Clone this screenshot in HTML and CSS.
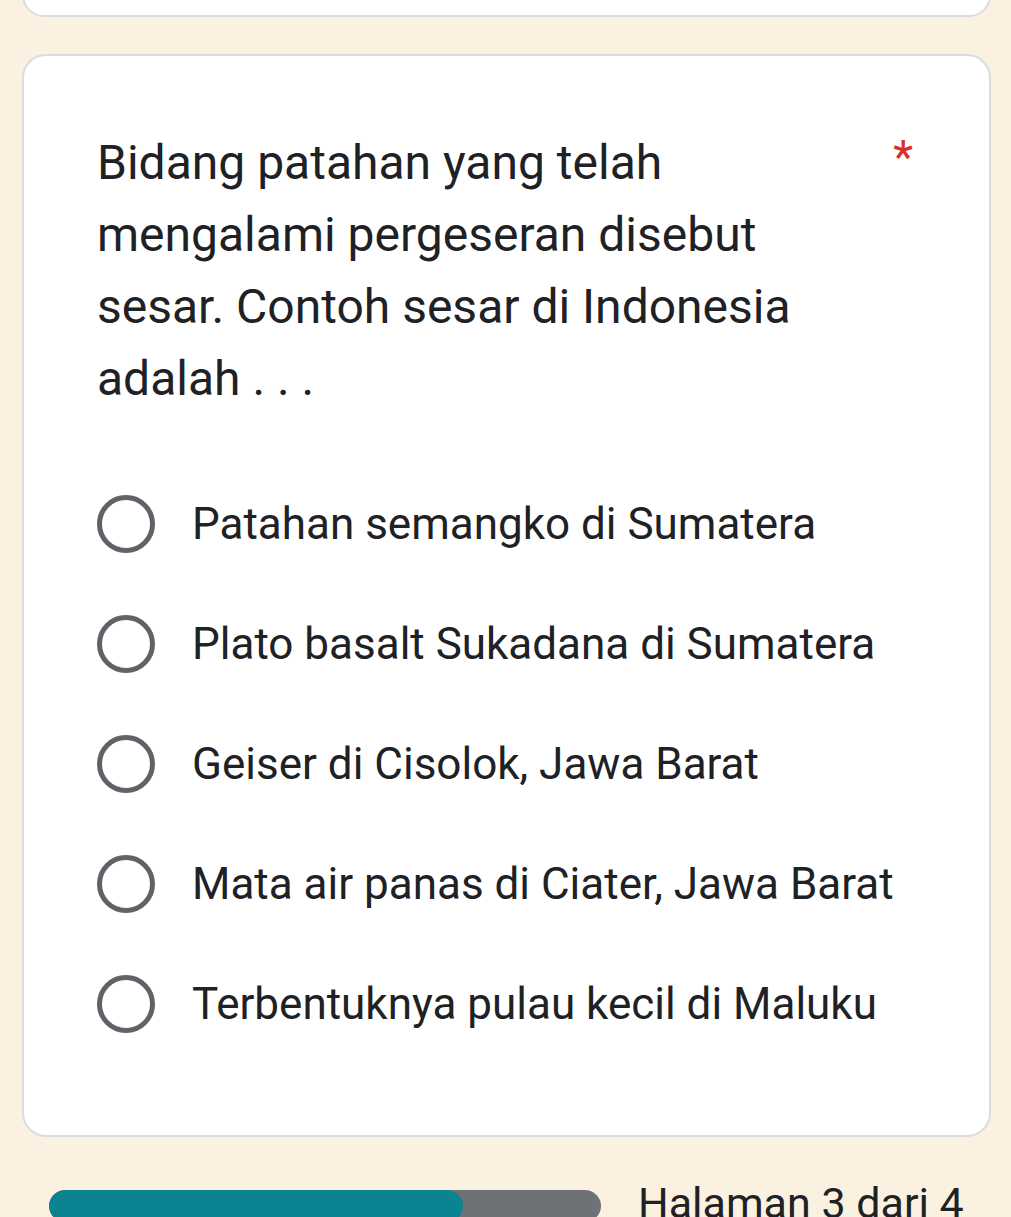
FILE: index.html
```html
<!DOCTYPE html>
<html>
    <head>
        <link rel="stylesheet" href="styles.css">
    </head>
    <body>
        <div class="card prevCard"></div>

        <div class="card question">
            <div class="qHead">
                <div class="qText">
                    Bidang patahan yang telah mengalami pergeseran disebut sesar. Contoh sesar di Indonesia adalah . . .
                </div>
                <div class="required">*</div>
            </div>

            <div class="options">
                <label class="option">
                    <span class="radio"></span>
                    <span class="optText">Patahan semangko di Sumatera</span>
                </label>
                <label class="option">
                    <span class="radio"></span>
                    <span class="optText">Plato basalt Sukadana di Sumatera</span>
                </label>
                <label class="option">
                    <span class="radio"></span>
                    <span class="optText">Geiser di Cisolok, Jawa Barat</span>
                </label>
                <label class="option">
                    <span class="radio"></span>
                    <span class="optText">Mata air panas di Ciater, Jawa Barat</span>
                </label>
                <label class="option">
                    <span class="radio"></span>
                    <span class="optText">Terbentuknya pulau kecil di Maluku</span>
                </label>
            </div>
        </div>

        <div class="footer">
            <div class="progress">
                <div class="progressFill"></div>
            </div>
            <div class="pageText">Halaman 3 dari 4</div>
        </div>
    </body>
</html>
```

FILE: styles.css
```css
body{
    margin: 0;
    background-color: #FAF1E0;
    font-family: Roboto, "Noto Sans", sans-serif;
    color: #202124;
    overflow: hidden;
}

.card{
    background-color: white;
    border: 2px solid #DADCE0;
    border-radius: 24px;
    margin: 0 20px 0 22px;
}

.prevCard{
    height: 40px;
    margin-top: -27px;
}

.question{
    margin-top: 37px;
    padding: 71px 0 71px 0;
}

.qHead{
    display: flex;
    padding: 0 76px 0 73px;
}

.qText{
    flex: 1;
    font-size: 48px;
    line-height: 72px;
    padding-right: 80px;
}

.required{
    color: #D93025;
    font-size: 46px;
    line-height: 72px;
    margin-top: -6px;
}

.options{
    margin-top: 49px;
    padding-left: 73px;
}

.option{
    display: flex;
    align-items: center;
    height: 120px;
}

.radio{
    width: 48px;
    height: 48px;
    border: 5px solid #5F6368;
    border-radius: 50%;
    margin-right: 37px;
}

.optText{
    font-size: 44px;
}

.footer{
    display: flex;
    align-items: flex-start;
    padding-left: 49px;
    margin-top: 53px;
}

.progress{
    width: 552px;
    height: 32px;
    background-color: #6E7175;
    border-radius: 16px;
    overflow: hidden;
}

.progressFill{
    width: 414px;
    height: 100%;
    background-color: #0B8390;
    border-radius: 16px;
}

.pageText{
    margin-left: 37px;
    font-size: 43px;
    margin-top: -12px;
}
```
